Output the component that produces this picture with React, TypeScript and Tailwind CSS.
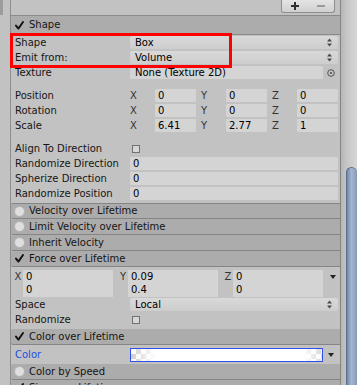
import React from "react"

const FONT = "font-['DejaVu_Sans',sans-serif]"

function Check() {
  return (
    <svg width="9" height="9" viewBox="0 0 9 9" className="shrink-0">
      <path d="M1 4.6 L3.4 7.6 L8 1" fill="none" stroke="#111" strokeWidth="1.9" strokeLinecap="round" strokeLinejoin="round" />
    </svg>
  )
}

function Radio() {
  return <span className="h-[9px] w-[9px] shrink-0 rounded-full bg-[#dedede] shadow-[0_0_0_1px_#b4b4b4]" />
}

function UpDown() {
  return (
    <svg width="5" height="9" viewBox="0 0 5 9" className="shrink-0">
      <path d="M0 3.6 L2.5 0.5 L5 3.6 Z" fill="#4a4a4a" />
      <path d="M0 5.4 L5 5.4 L2.5 8.5 Z" fill="#4a4a4a" />
    </svg>
  )
}

function Down() {
  return (
    <svg width="6" height="4" viewBox="0 0 6 4" className="shrink-0">
      <path d="M0 0 L6 0 L3 4 Z" fill="#222" />
    </svg>
  )
}

function Target() {
  return (
    <svg width="8" height="8" viewBox="0 0 8 8" className="shrink-0">
      <circle cx="4" cy="4" r="3.3" fill="none" stroke="#555" strokeWidth="1" />
      <circle cx="4" cy="4" r="1.1" fill="#555" />
    </svg>
  )
}

type HeaderProps = {
  label: string
  on?: boolean
  top?: boolean
}

function Header(props: HeaderProps) {
  return (
    <div
      className={
        "flex h-[16px] shrink-0 items-center gap-[5px] rounded-l-[2px] border-b border-[#858585] bg-[#acacac] pl-[4px] text-[#151515] " +
        (props.top ? "border-t" : "")
      }
    >
      {props.on ? <Check /> : <Radio />}
      <span>{props.label}</span>
    </div>
  )
}

function Row(props: { label: string; children?: React.ReactNode; blue?: boolean; tall?: boolean }) {
  return (
    <div className={"flex shrink-0 items-center " + (props.tall ? "h-[19px]" : "h-[15px]")}>
      <span className={"w-[119px] shrink-0 pl-[4px] " + (props.blue ? "text-[#1f4fe0]" : "text-[#151515]")}>
        {props.label}
      </span>
      <div className="flex flex-1 items-center pr-[2px]">{props.children}</div>
    </div>
  )
}

function Dropdown(props: { value: string }) {
  return (
    <div className="flex h-[13px] flex-1 items-center justify-between rounded-[2px] bg-[linear-gradient(#d9d9d9,#cdcdcd)] pl-[5px] pr-[6px]">
      <span>{props.value}</span>
      <UpDown />
    </div>
  )
}

function Field(props: { value: string }) {
  return (
    <div className="flex h-[13px] flex-1 items-center rounded-[1px] bg-[#d4d4d4] pl-[3px]">{props.value}</div>
  )
}

function Checkbox() {
  return <span className="ml-[2px] h-[8px] w-[8px] border border-[#727272] bg-[#d6d6d6]" />
}

function Vec3(props: { label: string; x: string; y: string; z: string }) {
  const parts = [
    ["X", props.x],
    ["Y", props.y],
    ["Z", props.z],
  ]
  return (
    <Row label={props.label}>
      <div className="grid flex-1 grid-cols-3 gap-[5px]">
        {parts.map(function (p) {
          return (
            <div key={p[0]} className="flex items-center">
              <span className="w-[25px] shrink-0 text-[#333]">{p[0]}</span>
              <Field value={p[1]} />
            </div>
          )
        })}
      </div>
    </Row>
  )
}

const FORCE = [
  ["X", "0", "0"],
  ["Y", "0.09", "0.4"],
  ["Z", "0", "0"],
]

export default function App() {
  return (
    <div className={"flex h-[385px] w-[357px] overflow-hidden bg-[#c2c2c2] text-[10px] leading-none " + FONT}>
      <div className="w-[10px] shrink-0">
        <div className="h-[15px] w-[3px] bg-[#9c9c9c]" />
      </div>
      <div className="w-px shrink-0 bg-[#8e8e8e]" />

      <div className="relative flex w-[329px] shrink-0 flex-col">
        <div className="flex h-[15px] shrink-0 items-start justify-end pr-[5px]">
          <div className="flex h-[13px] w-[54px] items-center rounded-b-[3px] border-x border-b border-[#8f8f8f] bg-[linear-gradient(#e4e4e4,#d0d0d0)]">
            <div className="flex flex-1 justify-center">
              <svg width="8" height="8" viewBox="0 0 8 8">
                <path d="M4 0 V8 M0 4 H8" stroke="#2e2e2e" strokeWidth="2" />
              </svg>
            </div>
            <div className="flex flex-1 justify-center">
              <svg width="8" height="2" viewBox="0 0 8 2">
                <path d="M0 1 H8" stroke="#9a9a9a" strokeWidth="2" />
              </svg>
            </div>
          </div>
        </div>

        <div className="flex h-[20px] shrink-0 items-center gap-[5px] border-y border-[#8a8a8a] bg-[#acacac] pl-[4px] text-[#151515]">
          <Check />
          <span>Shape</span>
        </div>

        <Row label="Shape">
          <Dropdown value="Box" />
        </Row>
        <Row label="Emit from:">
          <Dropdown value="Volume" />
        </Row>
        <Row label="Texture">
          <div className="flex h-[13px] w-[193px] items-center rounded-[1px] bg-[#d4d4d4] pl-[5px]">None (Texture 2D)</div>
          <div className="flex flex-1 justify-center">
            <Target />
          </div>
        </Row>

        <div className="h-[8px] shrink-0" />
        <Vec3 label="Position" x="0" y="0" z="0" />
        <Vec3 label="Rotation" x="0" y="0" z="0" />
        <Vec3 label="Scale" x="6.41" y="2.77" z="1" />

        <div className="h-[8px] shrink-0" />
        <Row label="Align To Direction">
          <Checkbox />
        </Row>
        <Row label="Randomize Direction">
          <Field value="0" />
        </Row>
        <Row label="Spherize Direction">
          <Field value="0" />
        </Row>
        <Row label="Randomize Position">
          <Field value="0" />
        </Row>

        <div className="mt-[2px] flex shrink-0 flex-col">
          <Header label="Velocity over Lifetime" top />
          <Header label="Limit Velocity over Lifetime" />
          <Header label="Inherit Velocity" />
          <Header label="Force over Lifetime" on />
        </div>

        <div className="mt-[3px] flex h-[27px] shrink-0 items-stretch gap-[5px] pl-[2px]">
          {FORCE.map(function (f) {
            return (
              <div key={f[0]} className="flex">
                <span className="flex h-[13px] w-[10px] items-center justify-center text-[#333]">{f[0]}</span>
                <div className="flex w-[90px] flex-col bg-[#d4d4d4] pl-[3px]">
                  <span className="flex h-[13.5px] items-center">{f[1]}</span>
                  <span className="flex h-[13.5px] items-center">{f[2]}</span>
                </div>
              </div>
            )
          })}
          <div className="flex h-[13px] items-center pl-[2px]">
            <Down />
          </div>
        </div>

        <Row label="Space">
          <Dropdown value="Local" />
        </Row>
        <Row label="Randomize">
          <Checkbox />
        </Row>

        <div className="mt-[2px] flex shrink-0 flex-col">
          <Header label="Color over Lifetime" on />
        </div>
        <Row label="Color" blue tall>
          <div className="relative h-[14px] w-[193px] border border-[#3150ea] bg-[repeating-conic-gradient(#cfcfcf_0_25%,#fafafa_0_50%)] bg-[length:10px_10px]">
            <div className="absolute inset-0 bg-[linear-gradient(to_right,rgba(255,255,255,0)_0%,#ffffff_13%,#ffffff_90%,rgba(255,255,255,0.2)_100%)]" />
          </div>
          <div className="flex flex-1 justify-center">
            <Down />
          </div>
        </Row>
        <div className="flex shrink-0 flex-col">
          <Header label="Color by Speed" />
          <Header label="Size over Lifetime" on />
        </div>

        <div className="absolute left-[-1px] top-[33px] h-[35px] w-[222px] border-[3px] border-[#ff0000]" />
      </div>

      <div className="w-px shrink-0 bg-[#868686]" />
      <div className="flex w-[16px] shrink-0 flex-col bg-[linear-gradient(to_right,#b6b6b6,#c6c6c6_35%,#d6d6d6)]">
        <div className="ml-[5px] mt-[167px] w-[11px] flex-1 rounded-t-[6px] border-l border-t border-[#566c8c] bg-[linear-gradient(to_right,#7088aa,#a6b6cf_45%,#8599b8)]" />
      </div>
    </div>
  )
}
